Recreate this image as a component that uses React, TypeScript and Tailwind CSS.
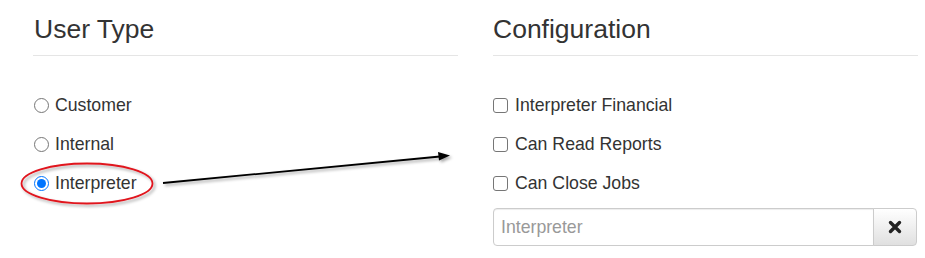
import React from "react";

const font = { fontFamily: '"Liberation Sans", Arial, sans-serif' };

function Radio({ label, checked }: { label: string; checked?: boolean }) {
  return (
    <label className="flex h-[39px] items-center text-[17.7px] text-[#333]">
      <span
        className={
          checked
            ? "ml-[1px] mr-[6px] flex h-[15px] w-[15px] items-center justify-center rounded-full border border-[#0075ff] bg-white"
            : "ml-[1px] mr-[6px] flex h-[15px] w-[15px] items-center justify-center rounded-full border border-[#767676] bg-white"
        }
      >
        {checked ? <span className="h-[9px] w-[9px] rounded-full bg-[#0075ff]" /> : null}
      </span>
      <span>{label}</span>
    </label>
  );
}

function Check({ label }: { label: string }) {
  return (
    <label className="flex h-[39px] items-center text-[17.7px] text-[#333]">
      <span className="mr-[7px] h-[15px] w-[15px] rounded-[3px] border border-[#767676] bg-white" />
      <span>{label}</span>
    </label>
  );
}

export default function App() {
  return (
    <div className="relative h-[258px] w-[925px] overflow-hidden bg-white" style={font}>
      <div className="flex gap-[35px] pl-[33px] pt-[15px]">
        <div className="w-[425px]">
          <h3 className="border-b border-[#e5e5e5] pb-[11px] pl-[1px] text-[26.5px] leading-[29px] font-normal text-[#333]">
            User Type
          </h3>
          <div className="mt-[29.5px]">
            <Radio label="Customer" />
            <Radio label="Internal" />
            <Radio label="Interpreter" checked />
          </div>
        </div>
        <div className="w-[425px]">
          <h3 className="border-b border-[#e5e5e5] pb-[11px] text-[26.5px] leading-[29px] font-normal text-[#333]">
            Configuration
          </h3>
          <div className="mt-[29.5px]">
            <Check label="Interpreter Financial" />
            <Check label="Can Read Reports" />
            <Check label="Can Close Jobs" />
          </div>
          <div className="mt-[5.5px] flex h-[38px] w-[424px]">
            <input
              type="text"
              placeholder="Interpreter"
              className="h-full flex-1 rounded-l-[4px] border border-[#ccc] px-[7px] text-[17.7px] text-[#333] placeholder:text-[#999] shadow-[inset_0_1px_1px_rgba(0,0,0,0.075)] outline-none"
              style={font}
            />
            <button className="-ml-px flex h-full w-[44px] items-center justify-center rounded-r-[4px] border border-[#ccc] bg-gradient-to-b from-white to-[#e0e0e0]">
              <svg width="14" height="14" viewBox="0 0 14 14">
                <path d="M2.5 2.5 L11.5 11.5 M11.5 2.5 L2.5 11.5" stroke="#222" strokeWidth="3.4" strokeLinecap="round" />
              </svg>
            </button>
          </div>
        </div>
      </div>
      <svg className="pointer-events-none absolute left-0 top-0" width="925" height="258">
        <defs>
          <filter id="sh" x="-20%" y="-50%" width="140%" height="200%">
            <feDropShadow dx="2" dy="2" stdDeviation="1.5" floodColor="#000" floodOpacity="0.35" />
          </filter>
        </defs>
        <ellipse cx="87" cy="183.5" rx="65.5" ry="20" fill="none" stroke="#e0141e" strokeWidth="1.8" filter="url(#sh)" />
        <g filter="url(#sh)">
          <line x1="163" y1="183" x2="440" y2="156.5" stroke="#000" strokeWidth="1.8" />
          <path d="M450 155.5 L438 152 L439 160.5 Z" fill="#000" />
        </g>
      </svg>
    </div>
  );
}
